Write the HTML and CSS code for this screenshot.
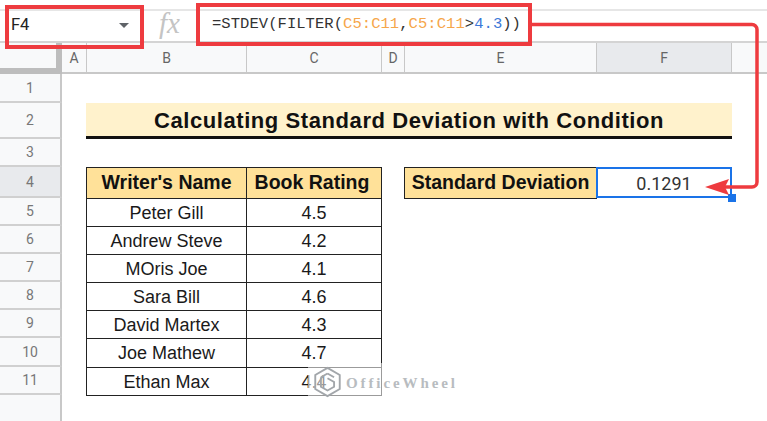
FILE: index.html
```html
<!DOCTYPE html>
<html lang="en">
<head>
  <meta charset="UTF-8">
  <title>Calculating Standard Deviation with Condition</title>
  <link rel="stylesheet" href="styles.css">
</head>
<body>
  <div class="app">
    <div class="formula-bar">
      <div class="name-box">
        <span>F4</span>
        <span class="caret"></span>
      </div>
      <div class="fx">fx</div>
      <div class="formula">=STDEV(FILTER(<span class="ref">C5:C11</span>,<span class="ref">C5:C11</span>&gt;<span class="num">4.3</span>))</div>
    </div>

    <div class="sheet">
      <!-- column headers -->
      <div class="corner"></div>
      <div class="col-head">A</div>
      <div class="col-head">B</div>
      <div class="col-head">C</div>
      <div class="col-head">D</div>
      <div class="col-head">E</div>
      <div class="col-head active">F</div>
      <div class="col-head last"></div>

      <!-- row 1 -->
      <div class="row-head">1</div>
      <div class="blank full"></div>

      <!-- row 2 -->
      <div class="row-head">2</div>
      <div class="blank"></div>
      <div class="title">Calculating Standard Deviation with Condition</div>
      <div class="blank"></div>

      <!-- row 3 -->
      <div class="row-head">3</div>
      <div class="blank full"></div>

      <!-- row 4 -->
      <div class="row-head active">4</div>
      <div class="blank"></div>
      <div class="cell head">Writer's Name</div>
      <div class="cell head rating">Book Rating</div>
      <div class="blank"></div>
      <div class="cell head label">Standard Deviation</div>
      <div class="cell selected">0.1291<span class="handle"></span></div>
      <div class="blank"></div>

      <!-- rows 5 to 11 -->
      <div class="row-head">5</div>
      <div class="blank"></div>
      <div class="cell">Peter Gill</div>
      <div class="cell">4.5</div>
      <div class="blank rest"></div>

      <div class="row-head">6</div>
      <div class="blank"></div>
      <div class="cell">Andrew Steve</div>
      <div class="cell">4.2</div>
      <div class="blank rest"></div>

      <div class="row-head">7</div>
      <div class="blank"></div>
      <div class="cell">MOris Joe</div>
      <div class="cell">4.1</div>
      <div class="blank rest"></div>

      <div class="row-head">8</div>
      <div class="blank"></div>
      <div class="cell">Sara Bill</div>
      <div class="cell">4.6</div>
      <div class="blank rest"></div>

      <div class="row-head">9</div>
      <div class="blank"></div>
      <div class="cell">David Martex</div>
      <div class="cell">4.3</div>
      <div class="blank rest"></div>

      <div class="row-head">10</div>
      <div class="blank"></div>
      <div class="cell">Joe Mathew</div>
      <div class="cell">4.7</div>
      <div class="blank rest"></div>

      <div class="row-head">11</div>
      <div class="blank"></div>
      <div class="cell">Ethan Max</div>
      <div class="cell">4.4</div>
      <div class="blank rest"></div>

      <div class="row-head end"></div>
      <div class="blank full"></div>
    </div>
  </div>

  <!-- red callouts drawn on top of the screenshot -->
  <div class="callout callout-name"></div>
  <div class="callout callout-formula"></div>
  <svg class="arrow" width="767" height="421" viewBox="0 0 767 421" fill="none">
    <path d="M531 24.500H752a5 5 0 0 1 5 5V182a5 5 0 0 1-5 5H716" stroke="#ee3b3f" stroke-width="3.5"/>
    <path d="M705 187L729 179L725 187L729 195Z" fill="#ee3b3f"/>
  </svg>

  <div class="watermark">
    <svg width="29" height="32" viewBox="0 0 30 34" fill="none" stroke="#a2a6aa" stroke-width="2">
      <path d="M15 2L28 9.500V24.500L15 32L2 24.500V9.500Z"/>
      <path d="M15 8L22 12M8 12L15 8M8 12V22L15 26L22 22V17L15 13"/>
    </svg>
    <span class="watermark-text">OfficeWheel</span>
  </div>
</body>
</html>
```

FILE: styles.css
```css
* {
  box-sizing: border-box;
}
body {
  margin: 0;
  width: 767px;
  height: 421px;
  overflow: hidden;
  background-color: white;
  color: #1a1a1a;
  font-family: "Liberation Sans", Arial, sans-serif;
}
.formula-bar {
  display: flex;
  align-items: center;
  height: 43px;
  padding-top: 9px;
  border-bottom: 2px solid #d4d4d4;
  background: linear-gradient(#fff 9px, #e6e6e6 9px, #e6e6e6 11px, #fff 11px);
}
.name-box {
  display: flex;
  align-items: center;
  justify-content: space-between;
  width: 140px;
  padding: 0 11px 0 11px;
  font-family: Roboto, sans-serif;
  font-size: 16.500px;
  color: #222;
  margin-top: -2px;
}
.caret {
  width: 0;
  height: 0;
  border-left: 5px solid transparent;
  border-right: 5px solid transparent;
  border-top: 5px solid #5f6368;
  margin-top: 2px;
}
.fx {
  width: 72px;
  padding-left: 19px;
  font-family: "Liberation Serif", serif;
  font-style: italic;
  font-size: 29px;
  color: #c4c4c4;
  margin-top: -4px;
}
.formula {
  font-family: "Liberation Mono", monospace;
  font-size: 15.500px;
  letter-spacing: 0.06px;
  color: #333;
  margin-top: -2px;
}
.ref {
  color: #f6a64a;
}
.num {
  color: #3b78d8;
}
.sheet {
  display: grid;
  grid-template-columns: 62px 25px 160px 135px 23px 192px 135px 35px;
  grid-template-rows: 31px 29px 36px 28px 31px 28px 28px 28px 28px 28px 29px 28px 26px;
  background-color: white;
}
.corner {
  background-color: #f8f9fa;
  border-right: 6px solid #bdbdbd;
  border-bottom: 6px solid #bdbdbd;
}
.col-head {
  display: flex;
  align-items: center;
  justify-content: center;
  background-color: #f8f9fa;
  border-right: 1px solid #c8c8c8;
  border-bottom: 2px solid #c8c8c8;
  font-family: Roboto, sans-serif;
  font-size: 14px;
  color: #666;
}
.col-head.active {
  background-color: #e8eaed;
}
.col-head.last {
  border-right: none;
}
.row-head {
  display: flex;
  align-items: center;
  justify-content: center;
  background-color: #f8f9fa;
  border-right: 2px solid #c8c8c8;
  border-bottom: 2px solid #d0d0d0;
  font-family: Roboto, sans-serif;
  font-size: 14px;
  color: #777;
}
.row-head.active {
  background-color: #e8eaed;
}
.row-head.end {
  border-bottom: none;
}
.blank.full {
  grid-column: 2 / -1;
}
.blank.rest {
  grid-column: 5 / -1;
}
.title {
  grid-column: 3 / 8;
  display: flex;
  align-items: center;
  justify-content: center;
  margin-left: -1px;
  padding-top: 3px;
  background-color: #fff2cc;
  border-bottom: 3px solid #111;
  font-size: 22px;
  font-weight: bold;
  letter-spacing: 0.58px;
  color: #111;
}
.cell {
  position: relative;
  display: flex;
  align-items: center;
  justify-content: center;
  margin: 0 0 -1px -1px;
  padding-top: 1px;
  border: 1px solid #222;
  font-size: 18px;
  background-color: white;
}
.cell.head {
  padding-top: 0;
  padding-bottom: 2px;
  background-color: #ffe199;
  font-size: 19.500px;
  font-weight: bold;
  color: #111;
  border-width: 1.500px;
}
.cell.rating {
  padding-right: 4px;
}
.cell.label {
  grid-column: 6;
}
.cell.selected {
  margin: 0 0 0 -1px;
  border: 2.500px solid #1a73e8;
  font-family: Roboto, sans-serif;
  font-size: 18px;
  color: #333;
}
.handle {
  position: absolute;
  right: -6px;
  bottom: -6px;
  width: 8px;
  height: 8px;
  background-color: #1a73e8;
}
.callout {
  position: absolute;
  border: 4px solid #ee3b3f;
}
.callout-name {
  left: 5px;
  top: 5px;
  width: 139px;
  height: 44px;
}
.callout-formula {
  left: 196px;
  top: 3px;
  width: 336px;
  height: 43px;
}
.arrow {
  position: absolute;
  left: 0;
  top: 0;
}
.watermark {
  position: absolute;
  left: 308px;
  top: 363px;
  width: 150px;
  height: 36px;
  display: flex;
  align-items: center;
  gap: 4px;
  padding: 2px 0 0 5px;
  background-color: rgba(255, 255, 255, 0.55);
  font-family: "Liberation Serif", serif;
  font-size: 15px;
  font-weight: bold;
  letter-spacing: 2.9px;
  color: #b8bcc0;
}
.watermark-text {
  margin-top: 3px;
}
```
